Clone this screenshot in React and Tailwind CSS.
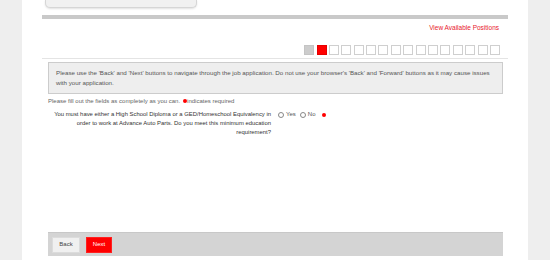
export default function App() {
  const steps = Array.from({ length: 16 }, (_, i) => i);
  return (
    <div
      className="flex w-[550px] h-[260px] overflow-hidden bg-white text-[#555]"
      style={{ fontFamily: '"Liberation Sans", Arial, sans-serif' }}
    >
      <div className="w-[22px] shrink-0 bg-[#eeeeee]" />
      <div className="flex-1 flex flex-col px-[20px] bg-white">
        {/* top card remnant */}
        <div className="ml-[3px] w-[152px] h-[8px] bg-[#f1f1f1] border border-t-0 border-[#d6d6d6] rounded-b-[5px] shadow-[0_1px_2px_rgba(0,0,0,0.12)]" />
        <div className="mt-[7px] h-[4px] bg-[#c9c9c9]" />
        <div className="mt-[4px] flex justify-end pr-[9px]">
          <span className="text-[6.5px] leading-[10px] text-[#e8192c]">View Available Positions</span>
        </div>
        <div className="mt-[12px] flex justify-end pr-[8px] gap-[2.4px]">
          {steps.map((i) => (
            <div
              key={i}
              className={
                i === 0
                  ? "w-[10px] h-[10px] bg-[#cccccc] border border-[#c4c4c4]"
                  : i === 1
                  ? "w-[10px] h-[10px] bg-[#ff0000] border border-[#e60000]"
                  : "w-[10px] h-[10px] bg-white border border-[#cfcfcf]"
              }
            />
          ))}
        </div>
        <div className="mt-[3px] h-px bg-[#e4e4e4]" />
        <div className="mt-[3px] ml-[6px] mr-[5px] bg-[#eeeeee] border border-[#cccccc] px-[7px] pt-[5px] pb-[5px] text-[6.2px] leading-[10px] text-[#555]">
          Please use the 'Back' and 'Next' buttons to navigate through the job application. Do not use your browser's 'Back' and 'Forward' buttons as it may cause issues with your application.
        </div>
        <div className="mt-[2px] ml-[6px] flex items-center text-[6px] leading-[10px] text-[#666]">
          <span>Please fill out the fields as completely as you can.</span>
          <span className="ml-[3px] w-[4px] h-[4px] rounded-full bg-[#ff0000]" />
          <span>indicates required</span>
        </div>
        <div className="mt-[4px] flex items-start">
          <div className="w-[229px] shrink-0 text-right text-[5.9px] leading-[9px] text-[#333] whitespace-nowrap">
            You must have either a High School Diploma or a GED/Homeschool Equivalency in
            <br />
            order to work at Advance Auto Parts. Do you meet this minimum education
            <br />
            requirement?
          </div>
          <div className="ml-[7px] flex items-center h-[9px] text-[6px] text-[#555]">
            <span className="w-[6px] h-[6px] rounded-full border border-[#888] bg-white" />
            <span className="ml-[2px]">Yes</span>
            <span className="ml-[4px] w-[6px] h-[6px] rounded-full border border-[#888] bg-white" />
            <span className="ml-[2px]">No</span>
            <span className="ml-[7px] w-[4px] h-[4px] rounded-full bg-[#ff0000]" />
          </div>
        </div>
        <div className="flex-1" />
        <div className="ml-[6px] mr-[5px] h-[24px] bg-[#d4d4d4] border-t border-[#c8c8c8] flex items-center px-[4px] gap-[6px]">
          <div className="w-[28px] h-[16px] bg-[#f0f0f0] border border-[#dcdcdc] flex items-center justify-center text-[6px] text-[#444]">
            Back
          </div>
          <div className="w-[26px] h-[16px] bg-[#ff0000] border border-[#ff2020] flex items-center justify-center text-[6px] text-white">
            Next
          </div>
        </div>
        <div className="h-[4px]" />
      </div>
      <div className="w-[22px] shrink-0 bg-[#eeeeee]" />
    </div>
  );
}
